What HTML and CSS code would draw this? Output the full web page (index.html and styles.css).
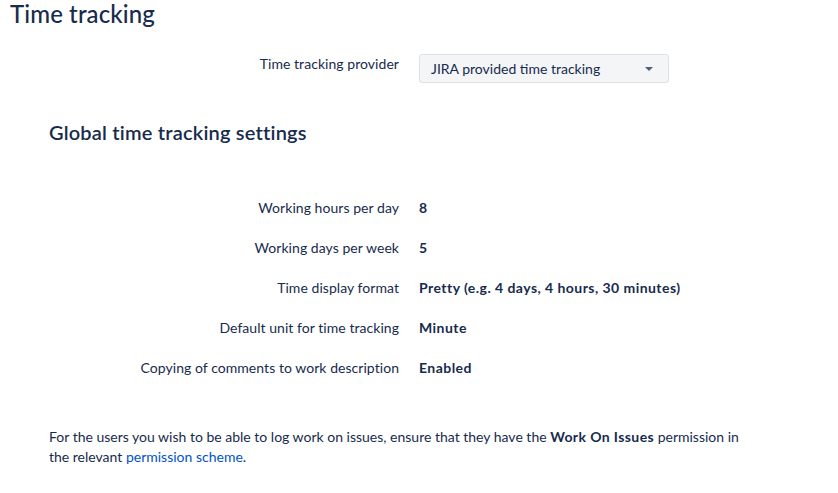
FILE: index.html
```html
<!DOCTYPE html>
<html lang="en">
<head>
    <meta charset="UTF-8">
    <title>Time tracking</title>
    <link rel="stylesheet" href="styles.css">
</head>
<body>
    <h1 class="page-title">Time tracking</h1>

    <div class="field-row provider-row">
        <label class="field-label">Time tracking provider</label>
        <div class="field-control">
            <button class="select-box">
                <span>JIRA provided time tracking</span>
                <span class="select-arrow"></span>
            </button>
        </div>
    </div>

    <div class="settings">
        <h2 class="section-title">Global time tracking settings</h2>

        <div class="settings-list">
            <div class="field-row">
                <span class="field-label">Working hours per day</span>
                <strong class="field-value">8</strong>
            </div>
            <div class="field-row">
                <span class="field-label">Working days per week</span>
                <strong class="field-value">5</strong>
            </div>
            <div class="field-row">
                <span class="field-label">Time display format</span>
                <strong class="field-value">Pretty (e.g. 4 days, 4 hours, 30 minutes)</strong>
            </div>
            <div class="field-row">
                <span class="field-label">Default unit for time tracking</span>
                <strong class="field-value">Minute</strong>
            </div>
            <div class="field-row">
                <span class="field-label">Copying of comments to work description</span>
                <strong class="field-value">Enabled</strong>
            </div>
        </div>

        <p class="note">For the users you wish to be able to log work on issues, ensure that they have the <strong>Work On Issues</strong> permission in the relevant <a href="#">permission scheme</a>.</p>
    </div>
</body>
</html>
```

FILE: styles.css
```css
* {
    margin: 0;
    padding: 0;
    box-sizing: border-box;
}

body {
    font-family: "Lato", "Open Sans", sans-serif;
    font-size: 14px;
    line-height: 20px;
    color: #172b4d;
    background: #fff;
    padding: 0 10px;
}

.page-title {
    font-size: 24px;
    font-weight: 500;
    line-height: 28px;
    letter-spacing: 0.1px;
}

.field-row {
    display: flex;
    align-items: center;
    gap: 20px;
}

.field-label {
    width: 389px;
    text-align: right;
    color: #172b4d;
    letter-spacing: 0.05px;
}

.provider-row {
    margin-top: 26px;
    align-items: flex-start;
}

.select-box {
    display: flex;
    align-items: center;
    justify-content: space-between;
    width: 250px;
    height: 29px;
    padding: 0 11px;
    font: inherit;
    font-weight: 400;
    color: #172b4d;
    background: #f4f5f7;
    border: 1px solid #dfe1e6;
    border-radius: 3px;
    cursor: pointer;
}

.select-arrow {
    width: 0;
    height: 0;
    border-left: 4px solid transparent;
    border-right: 4px solid transparent;
    border-top: 4px solid #505f79;
    margin-right: 4px;
}

.settings {
    padding-left: 39px;
}

.section-title {
    font-size: 20px;
    font-weight: 600;
    line-height: 24px;
    letter-spacing: 0.2px;
    margin-top: 37px;
}

.settings-list {
    margin-top: 54px;
    margin-left: -39px;
    display: flex;
    flex-direction: column;
    gap: 20px;
}

.field-value {
    font-weight: 700;
    letter-spacing: 0.45px;
}

.note {
    margin-top: 49px;
    width: 700px;
}

.note strong {
    letter-spacing: 0.4px;
}

.note a {
    color: #0052cc;
    text-decoration: none;
}
```
